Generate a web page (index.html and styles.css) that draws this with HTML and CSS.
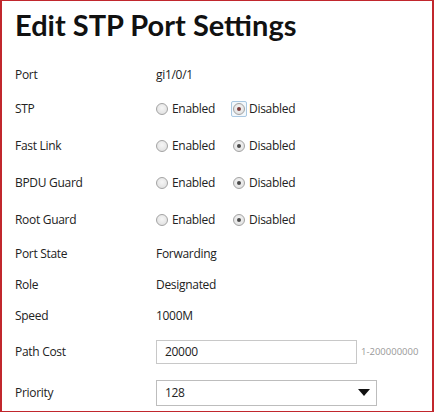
FILE: index.html
```html
<!DOCTYPE html>
<html>
<head>
<meta charset="utf-8">
<link rel="stylesheet" href="styles.css">
</head>
<body>
<div class="frame">
  <div class="header"><h1 class="title">Edit STP Port Settings</h1></div>
  <div class="row short"><div class="label">Port</div><div class="value">gi1/0/1</div></div>
  <div class="row radio-row">
    <div class="label">STP</div>
    <div class="value">
      <span class="opt"><span class="radio-box"><span class="radio"></span></span><span class="opt-text">Enabled</span></span>
      <span class="opt"><span class="radio-box focus"><span class="radio checked"></span></span><span class="opt-text">Disabled</span></span>
    </div>
  </div>
  <div class="row radio-row">
    <div class="label">Fast Link</div>
    <div class="value">
      <span class="opt"><span class="radio-box"><span class="radio"></span></span><span class="opt-text">Enabled</span></span>
      <span class="opt"><span class="radio-box"><span class="radio checked"></span></span><span class="opt-text">Disabled</span></span>
    </div>
  </div>
  <div class="row radio-row">
    <div class="label">BPDU Guard</div>
    <div class="value">
      <span class="opt"><span class="radio-box"><span class="radio"></span></span><span class="opt-text">Enabled</span></span>
      <span class="opt"><span class="radio-box"><span class="radio checked"></span></span><span class="opt-text">Disabled</span></span>
    </div>
  </div>
  <div class="row radio-row">
    <div class="label">Root Guard</div>
    <div class="value">
      <span class="opt"><span class="radio-box"><span class="radio"></span></span><span class="opt-text">Enabled</span></span>
      <span class="opt"><span class="radio-box"><span class="radio checked"></span></span><span class="opt-text">Disabled</span></span>
    </div>
  </div>
  <div class="row short"><div class="label">Port State</div><div class="value">Forwarding</div></div>
  <div class="row short"><div class="label">Role</div><div class="value">Designated</div></div>
  <div class="row short"><div class="label">Speed</div><div class="value">1000M</div></div>
  <div class="row tall">
    <div class="label">Path Cost</div>
    <div class="value"><div class="input">20000</div><span class="hint">1-200000000</span></div>
  </div>
  <div class="row tall">
    <div class="label">Priority</div>
    <div class="value"><div class="select"><span>128</span><svg class="caret" width="12" height="7" viewBox="0 0 12 7"><path d="M0 0H12L6 7Z" fill="#111"/></svg></div></div>
  </div>
</div>
</body>
</html>
```
FILE: styles.css
```css
html, body { margin: 0; padding: 0; background: #fff; }
body { font-family: "Open Sans", "DejaVu Sans", sans-serif; font-size: 12px; letter-spacing: -0.3px; color: #222; }
.frame {
  width: 434px; height: 412px; box-sizing: border-box;
  border: 1px solid #c1272d; border-left-width: 2px; border-right-width: 2px;
  overflow: hidden; padding-left: 13px;
}
.header { height: 58px; display: flex; align-items: flex-start; }
.title { margin: 7px 0 0 0; font-family: "Lato", sans-serif; font-weight: 700; font-size: 29px; line-height: 34px; letter-spacing: 0; color: #111; }
.row { display: flex; align-items: center; }
.row.short { height: 31px; }
.row.radio-row { height: 37px; }
.row.tall { height: 41px; }
.label { width: 141px; flex: none; color: #222; }
.value { display: flex; align-items: center; }
.opt { display: inline-flex; align-items: center; margin-right: 16px; height: 16px; }
.opt:first-child { margin-left: -2px; }
.opt-text { margin-left: 2px; }
.radio-box {
  width: 16px; height: 16px; box-sizing: border-box; border: 1px solid transparent; border-radius: 2px;
  display: flex; align-items: center; justify-content: center;
}
.radio-box.focus { border-color: #a9c8e2; background: #f3f8fc; }
.radio {
  width: 12px; height: 12px; border-radius: 50%; box-sizing: border-box;
  border: 1px solid #a3a3a3;
  background: radial-gradient(circle at 50% 40%, #f6f6f6 0%, #dcdcdc 100%);
  position: relative;
}
.radio.checked::after {
  content: ""; position: absolute; left: 3px; top: 3px; width: 4px; height: 4px; border-radius: 50%;
  background: #4a4a4a;
}
.focus .radio.checked::after { background: #7d3d3d; }
.input {
  width: 201px; height: 24px; box-sizing: border-box; border: 1px solid #c8c8c8;
  padding-left: 8px; display: flex; align-items: center; color: #222;
}
.hint { margin-left: 4px; font-size: 9.5px; color: #999; letter-spacing: 0; }
.select {
  width: 221px; height: 26px; box-sizing: border-box; border: 1px solid #bdbdbd;
  padding: 0 6px 0 8px; display: flex; align-items: center; justify-content: space-between;
}
.caret { display: block; }
```
